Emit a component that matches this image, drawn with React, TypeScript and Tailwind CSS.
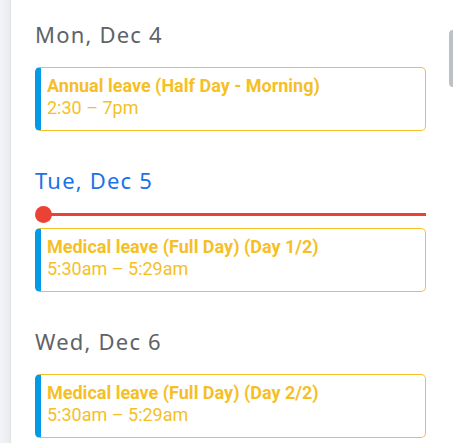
import React from "react";

type Ev = { title: string; time: string };

function Card({ ev }: { ev: Ev }) {
  return (
    <div className="h-[64px] rounded-[5px] border border-[#f6bf26] border-l-[6px] border-l-[#039be5] pl-[6px] pt-[7px] pb-[11px] font-['Roboto',sans-serif] text-[18px] leading-[22px] text-[#f6bf26]">
      <div className="font-bold whitespace-nowrap">{ev.title}</div>
      <div className="whitespace-nowrap">{ev.time}</div>
    </div>
  );
}

function Header({ text, today }: { text: string; today?: boolean }) {
  return (
    <div
      className={
        "h-[28px] text-[22px] leading-[28px] tracking-[1.2px] font-[450] font-['Noto_Sans',sans-serif] " +
        (today ? "text-[#1a73e8]" : "text-[#5f6368]")
      }
    >
      {text}
    </div>
  );
}

export default function App() {
  return (
    <div className="relative flex h-[443px] w-full overflow-hidden bg-white">
      <div className="w-[11px] shrink-0 bg-gradient-to-r from-[#f3f4f7] to-[#e9ebef] border-r border-[#dfe1e5]" />
      <div className="flex-1 pl-[24px] pr-[27px] pt-[20px]">
        <Header text="Mon, Dec 4" />
        <div className="mt-[19px]">
          <Card ev={{ title: "Annual leave (Half Day - Morning)", time: "2:30 – 7pm" }} />
        </div>
        <div className="mt-[35px]">
          <Header text="Tue, Dec 5" today />
        </div>
        <div className="mt-[11px] flex h-[18px] items-center">
          <div className="h-[17px] w-[17px] shrink-0 rounded-full bg-[#ea4335]" />
          <div className="-ml-[1px] h-[3px] flex-1 bg-[#ea4335]" />
        </div>
        <div className="mt-[5px]">
          <Card ev={{ title: "Medical leave (Full Day) (Day 1/2)", time: "5:30am – 5:29am" }} />
        </div>
        <div className="mt-[35px]">
          <Header text="Wed, Dec 6" />
        </div>
        <div className="mt-[19px]">
          <Card ev={{ title: "Medical leave (Full Day) (Day 2/2)", time: "5:30am – 5:29am" }} />
        </div>
      </div>
      <div className="absolute left-[449px] top-[30px] h-[57px] w-[8px] rounded-[4px] bg-[#bdc1c6]" />
    </div>
  );
}
